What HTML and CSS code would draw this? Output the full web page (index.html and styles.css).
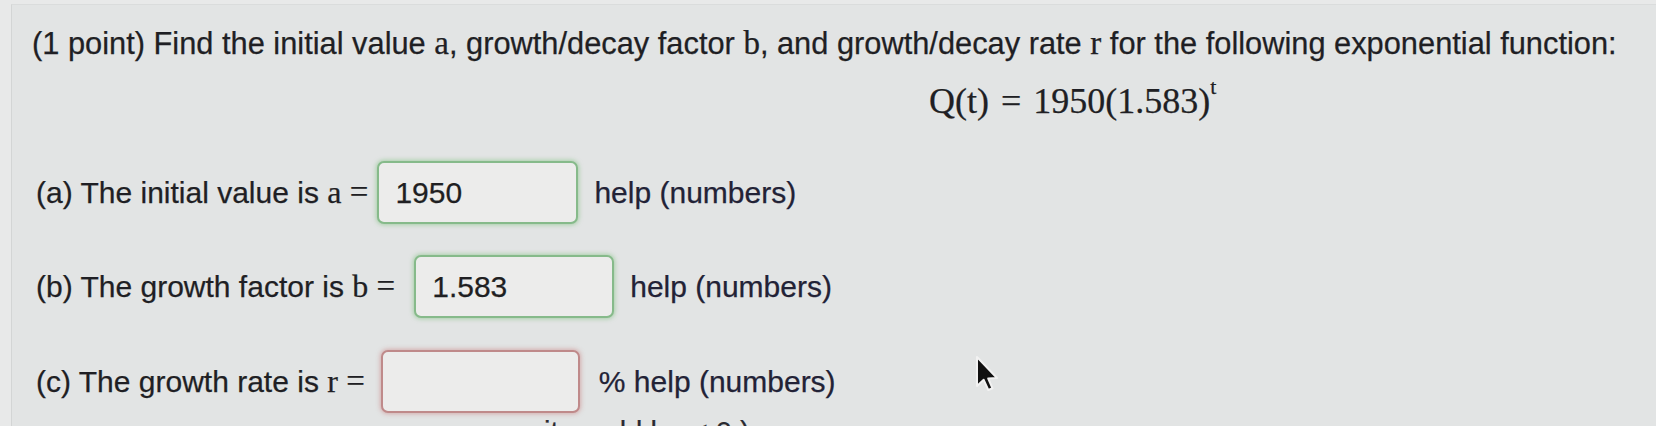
FILE: index.html
```html
<!DOCTYPE html>
<html>
<head>
<meta charset="utf-8">
<link rel="stylesheet" href="styles.css">
</head>
<body>
<div class="page">
  <div class="panel">
    <p class="title">(1 point) Find the initial value <span class="m">a</span>, growth/decay factor <span class="m">b</span>, and growth/decay rate <span class="m">r</span> for the following exponential function:</p>
    <div class="formula"><span class="m">Q(t)<span class="rel">=</span>1950(1.583)<sup>t</sup></span></div>
    <div class="row row-a">
      <span class="label">(a) The initial value is <span class="m">a</span> <span class="eq">=</span></span>
      <div class="input ok">1950</div>
      <span class="help">help (numbers)</span>
    </div>
    <div class="row row-b">
      <span class="label">(b) The growth factor is <span class="m">b</span> <span class="eq">=</span></span>
      <div class="input ok">1.583</div>
      <span class="help">help (numbers)</span>
    </div>
    <div class="row row-c">
      <span class="label">(c) The growth rate is <span class="m">r</span> <span class="eq">=</span></span>
      <div class="input bad"></div>
      <span class="help">% help (numbers)</span>
    </div>
    <p class="next">it would be &lt; 0 )</p>
  </div>
  <svg class="cursor" width="25" height="37" viewBox="0 0 25 37">
    <path d="M2 2 L2 31 L8.7 24.8 L13.3 35 L17.5 33.3 L13.2 23.5 L22 23 Z" fill="#111" stroke="#f2f2f2" stroke-width="2" stroke-linejoin="round"/>
  </svg>
</div>
</body>
</html>
```
FILE: styles.css
```css
html, body {
  margin: 0;
  padding: 0;
}
body {
  width: 1656px;
  height: 426px;
  overflow: hidden;
  background: #e8e9e9;
  font-family: "Liberation Sans", Arial, sans-serif;
  color: #1f1f24;
}
.page {
  position: relative;
  width: 1656px;
  height: 426px;
  overflow: hidden;
  padding-left: 11px;
  padding-top: 4px;
  box-sizing: border-box;
}
.panel {
  height: 100%;
  background: #e2e4e4;
  border-left: 1px solid #d3d5d5;
  border-top: 1px solid #dadcdc;
  padding-left: 20px;
  box-sizing: border-box;
  -webkit-text-stroke: 0.25px currentColor;
}
.title {
  margin: 0;
  padding-top: 20px;
  font-size: 30.8px;
  line-height: 36px;
  white-space: nowrap;
}
.m {
  font-family: "Liberation Serif", "Times New Roman", serif;
}
.title .m {
  font-size: 33px;
}
.formula {
  padding-left: 897px;
  margin-top: 19px;
  font-size: 36px;
  line-height: 40px;
  white-space: nowrap;
}
.rel {
  margin: 0 12px;
}
.formula sup {
  font-size: 22px;
  vertical-align: 19px;
  line-height: 0;
}
.row {
  display: flex;
  align-items: center;
  white-space: nowrap;
  font-size: 30px;
}
.row .m {
  font-size: 32px;
}
.eq {
  font-family: "Liberation Serif", serif;
  font-size: 33px;
}
.row-a { margin-top: 40px; }
.row-b { margin-top: 31px; }
.row-c { margin-top: 32px; }
.label {
  margin-left: 4px;
}
.input {
  box-sizing: border-box;
  height: 63px;
  border-radius: 7px;
  background: #ececeb;
  padding-left: 16px;
  display: flex;
  align-items: center;
  font-size: 30px;
  color: #1f1f22;
  margin-left: 9px;
  margin-right: 16px;
}
.row-a .input { width: 201px; }
.row-b .input { width: 200px; margin-left: 19px; }
.row-c .input { width: 199px; margin-left: 16px; margin-right: 19px; }
.ok {
  border: 2px solid #86ba8a;
  box-shadow: 0 0 4px 1px rgba(120, 190, 120, 0.55);
}
.bad {
  border: 2px solid #bf8a8a;
  box-shadow: 0 0 4px 1px rgba(200, 120, 120, 0.5);
}
.help {
  color: #222236;
}
.next {
  margin: 0;
  margin-top: 2px;
  padding-left: 512px;
  font-size: 29px;
  line-height: 34px;
  color: #2a2a30;
  white-space: nowrap;
}
.cursor {
  position: absolute;
  left: 975px;
  top: 355px;
}
```
